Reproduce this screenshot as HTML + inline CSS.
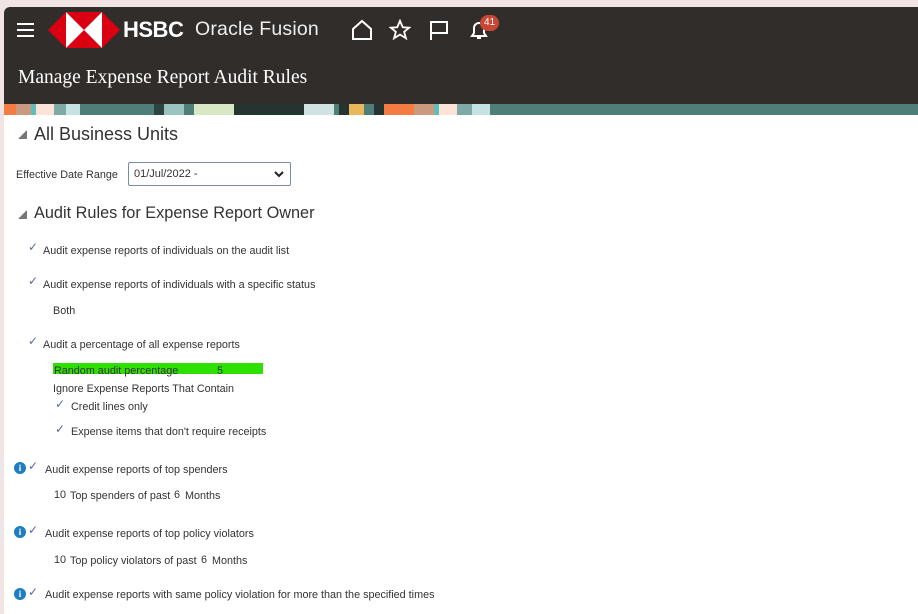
<!DOCTYPE html>
<html><head><style>
body{margin:0;width:918px;height:614px;background:#f1e4e4;position:relative;overflow:hidden;font-family:"Liberation Sans",Arial,sans-serif;color:#333}
.page{position:absolute;left:4px;top:7px;right:0;bottom:0;background:#fff;border-top-left-radius:6px;overflow:hidden}
.hdr{position:absolute;left:0;top:0;right:0;height:97px;background:#312d2a}
.banner{position:absolute;left:0;top:97px;right:0;height:11px;background:#4f7d77;overflow:hidden}
.banner div{position:absolute;top:0;height:11px}
.t{position:absolute;font-size:10.8px;white-space:nowrap;margin-top:1px}
.ck{position:absolute;color:#5a6a9a;font-size:12px}
.h2{position:absolute;font-size:18px;color:#333}
.tri{position:absolute;width:0;height:0;border-left:9px solid transparent;border-bottom:9px solid #777}
.info{position:absolute;width:12px;height:12px;border-radius:50%;background:#1d7fc2;color:#fff;font-size:9px;font-weight:bold;text-align:center;line-height:12px;font-family:"Liberation Serif",serif}
</style></head><body>
<div class="page">
<div class="hdr">
 <div style="position:absolute;left:13px;top:16px;width:17px">
  <div style="height:2px;background:#fff;margin-bottom:4px"></div><div style="height:2px;background:#fff;margin-bottom:4px"></div><div style="height:2px;background:#fff"></div></div>
 <svg style="position:absolute;left:44px;top:5px" width="72" height="36" viewBox="0 0 72 36">
  <polygon points="0,18 18,0 54,0 72,18 54,36 18,36" fill="#db0011"/>
  <polygon points="18,0 36,18 18,36" fill="#fff"/>
  <polygon points="54,0 36,18 54,36" fill="#fff"/>
 </svg>
 <div style="position:absolute;left:119px;top:10px;color:#fff;font-size:22px;font-weight:bold;letter-spacing:-0.5px">HSBC</div>
 <div style="position:absolute;left:191px;top:11px;color:#eee;font-size:19.5px;letter-spacing:0.2px">Oracle Fusion</div>
 <svg style="position:absolute;left:347px;top:12px" width="22" height="22" viewBox="0 0 22 22" fill="none" stroke="#fff" stroke-width="2"><path d="M2 10 L11 2 L20 10 V20 H2 Z"/></svg>
 <svg style="position:absolute;left:385px;top:12px" width="22" height="22" viewBox="0 0 24 24" fill="none" stroke="#fff" stroke-width="2"><path d="M12 2 L15 9 L22 9.5 L16.5 14 L18.5 21 L12 17 L5.5 21 L7.5 14 L2 9.5 L9 9 Z"/></svg>
 <svg style="position:absolute;left:424px;top:12px" width="22" height="22" viewBox="0 0 22 22" fill="none" stroke="#fff" stroke-width="2"><path d="M3 21 V3 H19 V14 H3"/></svg>
 <svg style="position:absolute;left:464px;top:12px" width="22" height="22" viewBox="0 0 22 22" fill="none" stroke="#fff" stroke-width="2"><path d="M4 17 H18 L16 14 V9 A5 5 0 0 0 6 9 V14 Z M9 19 H13"/></svg>
 <div style="position:absolute;left:476px;top:8px;width:19px;height:16px;border-radius:8px;background:#c74634;color:#fff;font-size:10px;text-align:center;line-height:16px">41</div>
 <div style="position:absolute;left:14px;top:60px;color:#fff;font-family:'Liberation Serif',serif;font-size:19.5px">Manage Expense Report Audit Rules</div>
</div>
<div class="banner">
 <div style="left:0;width:12px;background:#f47c43"></div>
 <div style="left:12px;width:15px;background:#c99a80"></div>
 <div style="left:27px;width:5px;background:#5fbfb8"></div>
 <div style="left:32px;width:18px;background:#fde2d8"></div>
 <div style="left:50px;width:25px;background:#7fa9a6"></div>
 <div style="left:62px;width:14px;background:#c5e3e2"></div>
 <div style="left:150px;width:30px;background:#2d4540"></div>
 <div style="left:160px;width:20px;background:#9bc3c0"></div>
 <div style="left:190px;width:40px;background:#d8e8c4"></div>
 <div style="left:230px;width:100px;background:#253430"></div>
 <div style="left:300px;width:30px;background:#cfe3e2"></div>
 <div style="left:335px;width:10px;background:#253430"></div>
 <div style="left:345px;width:15px;background:#e9b85a"></div>
 <div style="left:370px;width:10px;background:#253430"></div>
 <div style="left:380px;width:30px;background:#f47c43"></div>
 <div style="left:410px;width:20px;background:#c99a80"></div>
 <div style="left:430px;width:5px;background:#5fbfb8"></div>
 <div style="left:435px;width:18px;background:#fde2d8"></div>
 <div style="left:453px;width:15px;background:#7fa9a6"></div>
 <div style="left:468px;width:18px;background:#c5e3e2"></div>
</div>
<div class="tri" style="left:14px;top:123px"></div>
<div class="h2" style="left:30px;top:117px">All Business Units</div>
<div class="t" style="left:12px;top:161px">Effective Date Range</div>
<div style="position:absolute;left:124px;top:155px;width:156px;height:22px;border:1px solid #7a8aa8;border-radius:2px;font-size:11px;line-height:22px;padding-left:5px;box-sizing:content-box">01/Jul/2022 -
 <svg style="position:absolute;right:6px;top:8px" width="10" height="7" viewBox="0 0 10 7"><path d="M1 1 L5 5 L9 1" stroke="#222" stroke-width="2" fill="none"/></svg></div>
<div class="tri" style="left:14px;top:203px"></div>
<div class="h2" style="left:30px;top:197px;font-size:16.3px">Audit Rules for Expense Report Owner</div>
<div class="ck" style="left:24px;top:233px">✓</div><div class="t" style="left:39px;top:237px">Audit expense reports of individuals on the audit list</div>
<div class="ck" style="left:24px;top:267px">✓</div><div class="t" style="left:39px;top:271px">Audit expense reports of individuals with a specific status</div>
<div class="t" style="left:49px;top:297px">Both</div>
<div class="ck" style="left:24px;top:327px">✓</div><div class="t" style="left:39px;top:331px">Audit a percentage of all expense reports</div>
<div style="position:absolute;left:49px;top:356px;width:210px;height:11px;background:#2ee000"></div>
<div class="t" style="left:50px;top:357px">Random audit percentage</div><div class="t" style="left:213px;top:357px">5</div>
<div class="t" style="left:49px;top:375px">Ignore Expense Reports That Contain</div>
<div class="ck" style="left:51px;top:390px">✓</div><div class="t" style="left:67px;top:393px">Credit lines only</div>
<div class="ck" style="left:51px;top:415px">✓</div><div class="t" style="left:67px;top:418px">Expense items that don't require receipts</div>
<div class="info" style="left:10px;top:455px">i</div><div class="ck" style="left:24px;top:452px">✓</div><div class="t" style="left:41px;top:456px">Audit expense reports of top spenders</div>
<div class="t" style="left:50px;top:481px">10</div><div class="t" style="left:66px;top:482px">Top spenders of past</div><div class="t" style="left:170px;top:481px">6</div><div class="t" style="left:181px;top:482px">Months</div>
<div class="info" style="left:10px;top:519px">i</div><div class="ck" style="left:24px;top:516px">✓</div><div class="t" style="left:41px;top:520px">Audit expense reports of top policy violators</div>
<div class="t" style="left:50px;top:546px">10</div><div class="t" style="left:66px;top:547px">Top policy violators of past</div><div class="t" style="left:197px;top:546px">6</div><div class="t" style="left:208px;top:547px">Months</div>
<div class="info" style="left:10px;top:581px">i</div><div class="ck" style="left:24px;top:578px">✓</div><div class="t" style="left:41px;top:581px">Audit expense reports with same policy violation for more than the specified times</div>
</div>
</body></html>
